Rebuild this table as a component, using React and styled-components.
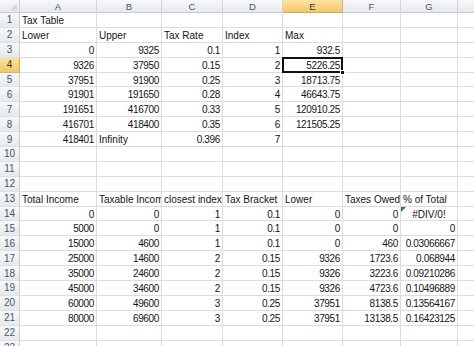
import React from 'react';
import styled, { createGlobalStyle, css } from 'styled-components';

const Global = createGlobalStyle`
  html, body { margin: 0; padding: 0; background: #fff; }
  body { font-family: "Liberation Sans", Arial, sans-serif; overflow: hidden; }
`;

const Viewport = styled.div`
  width: 474px;
  height: 346px;
  overflow: hidden;
  background: #fff;
`;

const Sheet = styled.div`
  display: grid;
  grid-template-columns: 20px 77px 65px 61px 60px 60px 58px 57px 64px;
  grid-template-rows: 13px;
  grid-auto-rows: 14.9px;
  font-size: 10px;
  color: #141414;
`;

const headerBase = css`
  box-sizing: border-box;
  display: flex;
  align-items: center;
  justify-content: center;
  font-size: 9.5px;
  color: ${p => (p.$sel ? '#3a3a30' : '#4a5668')};
  background: ${p =>
    p.$sel
      ? 'linear-gradient(#fbe3a4, #f3c767)'
      : 'linear-gradient(#f7f8fa, #e6e9ed)'};
`;

const Corner = styled.div`
  ${headerBase};
  position: relative;
  border-right: 1px solid #c6ccd3;
  border-bottom: 1px solid #c6ccd3;
  &::after {
    content: '';
    position: absolute;
    right: 2px;
    bottom: 2px;
    width: 0;
    height: 0;
    border-left: 7px solid transparent;
    border-bottom: 7px solid #d3d7dc;
  }
`;

const ColHeader = styled.div`
  ${headerBase};
  border-right: 1px solid ${p => (p.$sel ? '#e1b456' : '#d3d7dd')};
  border-bottom: 1px solid ${p => (p.$sel ? '#e0ab3c' : '#c6ccd3')};
  padding-top: 1px;
`;

const RowHeader = styled.div`
  ${headerBase};
  font-size: 10px;
  border-right: 1px solid ${p => (p.$sel ? '#e0ab3c' : '#c6ccd3')};
  border-bottom: 1px solid ${p => (p.$sel ? '#e1b456' : '#dde0e5')};
`;

const Cell = styled.div`
  box-sizing: border-box;
  position: relative;
  display: flex;
  align-items: center;
  padding: 1px 2px 0 2px;
  border-right: 1px solid #dadcdf;
  border-bottom: 1px solid #dadcdf;
  white-space: nowrap;
  overflow: ${p => (p.$active ? 'visible' : 'hidden')};
  justify-content: ${p =>
    p.$align === 'right' ? 'flex-end' : p.$align === 'center' ? 'center' : 'flex-start'};
  letter-spacing: ${p => (p.$num ? '-0.35px' : '0')};

  ${p =>
    p.$active &&
    css`
      z-index: 2;
      &::after {
        content: '';
        position: absolute;
        left: -1px;
        top: -1px;
        right: -1px;
        bottom: -1px;
        border: 2px solid #111;
        pointer-events: none;
      }
      &::before {
        content: '';
        position: absolute;
        right: -3px;
        bottom: -3px;
        width: 5px;
        height: 5px;
        background: #111;
        border: 1px solid #fff;
        box-sizing: border-box;
        z-index: 3;
      }
    `}

  ${p =>
    p.$err &&
    css`
      &::before {
        content: '';
        position: absolute;
        left: 0;
        top: 0;
        width: 0;
        height: 0;
        border-top: 5px solid #1d8a2e;
        border-right: 5px solid transparent;
      }
    `}
`;

const ERR = { err: '#DIV/0!' };

const data = [
  ['Tax Table'],
  ['Lower', 'Upper', 'Tax Rate', 'Index', 'Max'],
  [0, 9325, 0.1, 1, 932.5],
  [9326, 37950, 0.15, 2, 5226.25],
  [37951, 91900, 0.25, 3, 18713.75],
  [91901, 191650, 0.28, 4, 46643.75],
  [191651, 416700, 0.33, 5, 120910.25],
  [416701, 418400, 0.35, 6, 121505.25],
  [418401, 'Infinity', 0.396, 7],
  [],
  [],
  [],
  ['Total Income', 'Taxable Income', 'closest index', 'Tax Bracket', 'Lower', 'Taxes Owed', '% of Total'],
  [0, 0, 1, 0.1, 0, 0, ERR],
  [5000, 0, 1, 0.1, 0, 0, 0],
  [15000, 4600, 1, 0.1, 0, 460, 0.03066667],
  [25000, 14600, 2, 0.15, 9326, 1723.6, 0.068944],
  [35000, 24600, 2, 0.15, 9326, 3223.6, 0.09210286],
  [45000, 34600, 2, 0.15, 9326, 4723.6, 0.10496889],
  [60000, 49600, 3, 0.25, 37951, 8138.5, 0.13564167],
  [80000, 69600, 3, 0.25, 37951, 13138.5, 0.16423125],
  [],
  [],
];

const columns = ['A', 'B', 'C', 'D', 'E', 'F', 'G', 'H'];
const ACTIVE_ROW = 3; // row 4 (0-based index)
const ACTIVE_COL = 4; // column E

export default function App() {
  return (
    <Viewport>
      <Global />
      <Sheet>
        <Corner />
        {columns.map((c, i) => (
          <ColHeader key={c} $sel={i === ACTIVE_COL}>
            {c}
          </ColHeader>
        ))}
        {data.map((row, r) => (
          <React.Fragment key={r}>
            <RowHeader $sel={r === ACTIVE_ROW}>{r + 1}</RowHeader>
            {columns.map((c, ci) => {
              const v = row[ci];
              const isNum = typeof v === 'number';
              const isErr = v && typeof v === 'object';
              return (
                <Cell
                  key={c}
                  $align={isNum ? 'right' : isErr ? 'center' : 'left'}
                  $num={isNum}
                  $err={isErr}
                  $active={r === ACTIVE_ROW && ci === ACTIVE_COL}
                >
                  {v === undefined ? '' : isErr ? v.err : String(v)}
                </Cell>
              );
            })}
          </React.Fragment>
        ))}
      </Sheet>
    </Viewport>
  );
}
